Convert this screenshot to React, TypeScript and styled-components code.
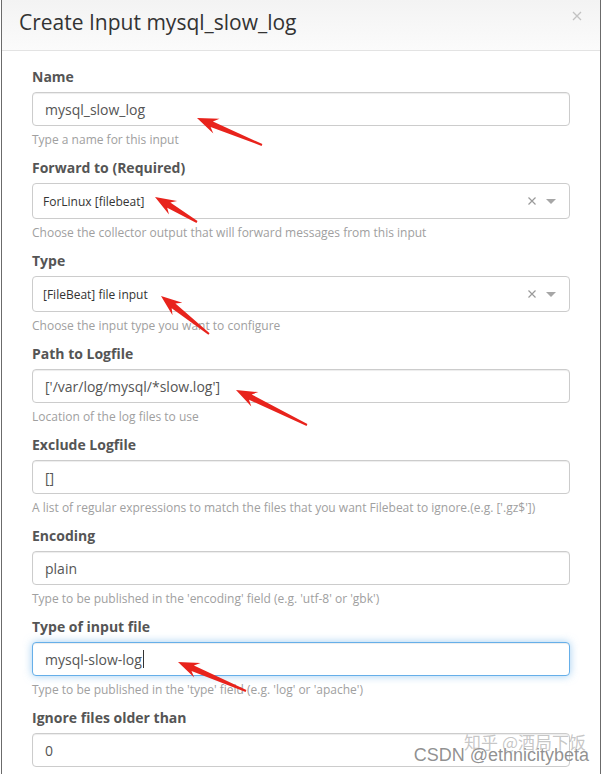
import React from "react";
import styled, { createGlobalStyle, css } from "styled-components";

const GlobalStyle = createGlobalStyle`
    html, body {
        margin: 0;
        padding: 0;
        background: #ffffff;
        font-family: "Open Sans", "Noto Sans", sans-serif;
    }
`;

type Field = {
    label: string;
    value: string;
    help?: string;
    select?: boolean;
    focused?: boolean;
};

const fields: Field[] = [
    { label: "Name", value: "mysql_slow_log", help: "Type a name for this input" },
    {
        label: "Forward to (Required)",
        value: "ForLinux [filebeat]",
        help: "Choose the collector output that will forward messages from this input",
        select: true,
    },
    {
        label: "Type",
        value: "[FileBeat] file input",
        help: "Choose the input type you want to configure",
        select: true,
    },
    {
        label: "Path to Logfile",
        value: "['/var/log/mysql/*slow.log']",
        help: "Location of the log files to use",
    },
    {
        label: "Exclude Logfile",
        value: "[]",
        help: "A list of regular expressions to match the files that you want Filebeat to ignore.(e.g. ['.gz$'])",
    },
    {
        label: "Encoding",
        value: "plain",
        help: "Type to be published in the 'encoding' field (e.g. 'utf-8' or 'gbk')",
    },
    {
        label: "Type of input file",
        value: "mysql-slow-log",
        help: "Type to be published in the 'type' field (e.g. 'log' or 'apache')",
        focused: true,
    },
    { label: "Ignore files older than", value: "0" },
];

// annotation arrows: tip -> tail
const arrows = [
    { tip: [197, 118], tail: [262, 145] },
    { tip: [155, 197], tail: [197, 222] },
    { tip: [161, 296], tail: [209, 334] },
    { tip: [236, 390], tail: [307, 425] },
    { tip: [178, 662], tail: [246, 691] },
];

const arrowPoints = (tip: number[], tail: number[]) => {
    const [tx, ty] = tip;
    const [sx, sy] = tail;
    const len = Math.hypot(sx - tx, sy - ty);
    const dx = (sx - tx) / len;
    const dy = (sy - ty) / len;
    const nx = -dy;
    const ny = dx;
    const L = 21;
    const W = 8;
    const p = (a: number, b: number) =>
        `${(tx + dx * a + nx * b).toFixed(1)},${(ty + dy * a + ny * b).toFixed(1)}`;
    return [
        p(0, 0),
        p(L, W),
        p(L - 5, 3),
        p(len, 1),
        p(len, -1),
        p(L - 5, -3),
        p(L, -W),
    ].join(" ");
};

export default function App() {
    return (
        <Page>
            <GlobalStyle />
            <Modal>
                <Header>
                    <Title>Create Input mysql_slow_log</Title>
                    <Close viewBox="0 0 10 10">
                        <path d="M1 1 L9 9 M9 1 L1 9" />
                    </Close>
                </Header>
                <Body>
                    {fields.map((f) => (
                        <Group key={f.label}>
                            <Label>{f.label}</Label>
                            {f.select ? (
                                <SelectBox>
                                    <SelectValue>{f.value}</SelectValue>
                                    <Clear viewBox="0 0 10 10">
                                        <path d="M1.5 1.5 L8.5 8.5 M8.5 1.5 L1.5 8.5" />
                                    </Clear>
                                    <Caret />
                                </SelectBox>
                            ) : (
                                <InputBox $focused={f.focused}>
                                    {f.value}
                                    {f.focused && <TextCursor />}
                                </InputBox>
                            )}
                            {f.help && <Help>{f.help}</Help>}
                        </Group>
                    ))}
                </Body>
            </Modal>

            <Annotations width="602" height="774" viewBox="0 0 602 774">
                {arrows.map((a, i) => (
                    <polygon key={i} points={arrowPoints(a.tip, a.tail)} fill="#e8231c" />
                ))}
            </Annotations>
            <ZhihuMark>知乎 @酒局下饭</ZhihuMark>
            <CsdnMark>CSDN @ethnicitybeta</CsdnMark>
        </Page>
    );
}

const Page = styled.div`
    position: relative;
    width: 602px;
    height: 774px;
    overflow: hidden;
`;

const Modal = styled.div`
    margin-left: 1px;
    width: 598px;
    min-height: 774px;
    border-left: 1px solid #6b6b6b;
    border-right: 1px solid #6b6b6b;
    background: #ffffff;
`;

const Header = styled.div`
    height: 51px;
    box-sizing: border-box;
    padding: 8px 18px 0 17px;
    display: flex;
    justify-content: space-between;
    align-items: flex-start;
    border-bottom: 1px solid #e3e3e3;
    background: linear-gradient(#f3f3f3, #fbfbfb);
`;

const Title = styled.div`
    font-size: 21px;
    line-height: 28px;
    color: #333333;
`;

const Close = styled.svg`
    width: 10px;
    height: 10px;
    margin-top: 3px;
    stroke: #c2c2c2;
    stroke-width: 1.3;
    fill: none;
`;

const Body = styled.div`
    padding: 16px 30px 20px 30px;
`;

const Group = styled.div`
    margin-bottom: 10px;
`;

const Label = styled.div`
    font-size: 14px;
    font-weight: 700;
    line-height: 20px;
    color: #555555;
    margin-bottom: 5px;
`;

const fieldBase = css`
    box-sizing: border-box;
    width: 100%;
    border: 1px solid #cccccc;
    border-radius: 4px;
    background: #ffffff;
    display: flex;
    align-items: center;
`;

const InputBox = styled.div<{ $focused?: boolean }>`
    ${fieldBase};
    height: 34px;
    padding: 0 12px;
    font-size: 14px;
    color: #555555;
    box-shadow: inset 0 1px 1px rgba(0, 0, 0, 0.075);
    ${({ $focused }) =>
        $focused &&
        css`
            border-color: #66afe9;
            box-shadow: inset 0 1px 1px rgba(0, 0, 0, 0.075),
                0 0 8px rgba(102, 175, 233, 0.6);
        `}
`;

const TextCursor = styled.span`
    display: inline-block;
    width: 1px;
    height: 18px;
    background: #333333;
    margin-left: 1px;
`;

const SelectBox = styled.div`
    ${fieldBase};
    height: 36px;
    padding: 0 13px 0 10px;
    gap: 9px;
`;

const SelectValue = styled.span`
    flex: 1;
    font-size: 12px;
    color: #333333;
`;

const Clear = styled.svg`
    width: 10px;
    height: 10px;
    stroke: #9a9a9a;
    stroke-width: 1.2;
    fill: none;
`;

const Caret = styled.span`
    width: 0;
    height: 0;
    border-left: 5px solid transparent;
    border-right: 5px solid transparent;
    border-top: 5px solid #a6a6a6;
`;

const Help = styled.div`
    margin-top: 5px;
    font-size: 12px;
    line-height: 17px;
    color: #a0a0a0;
`;

const Annotations = styled.svg`
    position: absolute;
    left: 0;
    top: 0;
    pointer-events: none;
`;

const ZhihuMark = styled.div`
    position: absolute;
    right: 16px;
    top: 731px;
    font-family: "Noto Sans CJK SC", sans-serif;
    font-size: 17px;
    line-height: 22px;
    color: rgba(150, 150, 150, 0.55);
    pointer-events: none;
`;

const CsdnMark = styled.div`
    position: absolute;
    right: 13px;
    top: 744px;
    font-family: "Liberation Sans", Arial, sans-serif;
    font-size: 18px;
    line-height: 22px;
    color: rgba(125, 125, 125, 0.85);
    text-shadow: 0 0 1px #ffffff;
    pointer-events: none;
`;
